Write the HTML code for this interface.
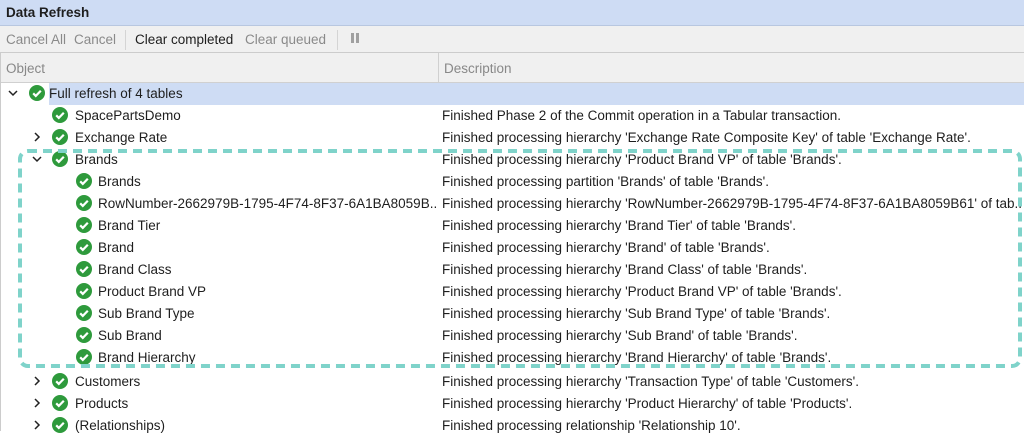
<!DOCTYPE html>
<html><head><style>
*{margin:0;padding:0;box-sizing:border-box}
body{width:1024px;height:431px;overflow:hidden;background:#fff;font-family:"Liberation Sans",sans-serif;font-size:13.5px;color:#1e1e1e;position:relative}
.title{position:absolute;left:0;top:0;width:1024px;height:26px;background:#cedcf4;font-weight:bold;font-size:13.5px;padding:5px 0 0 6px;border-bottom:1px solid #b8c7e0}
.tb{position:absolute;left:0;top:26px;width:1024px;height:27px;background:#f0f0f0;border-bottom:1px solid #ccc}
.tb span{position:absolute;top:6px;color:#8a8a8a}
.sep{position:absolute;top:4px;width:1px;height:20px;background:#d4d4d4}
.hdr{position:absolute;left:0;top:53px;width:1024px;height:30px;background:#f0f0f0;border-bottom:1px solid #d0d0d0;color:#888}
.hdr span{position:absolute;top:8px}
.r{position:absolute;left:0;width:1024px;height:22px}
.r span{position:absolute;top:4px;white-space:nowrap}
.ic{position:absolute;top:3px;width:16px;height:16px}
.ch{position:absolute;top:5px;width:10px;height:12px}
.d{left:442px}
</style></head><body>
<div class="title">Data Refresh</div>
<div class="tb">
<span style="left:6px">Cancel All</span><span style="left:74px">Cancel</span>
<div class="sep" style="left:125px"></div>
<span style="left:135px;color:#1e1e1e">Clear completed</span><span style="left:245px">Clear queued</span>
<div class="sep" style="left:337px"></div>
<div style="position:absolute;left:351px;top:7px;width:3px;height:10px;background:#a0a0a0"></div>
<div style="position:absolute;left:356px;top:7px;width:3px;height:10px;background:#a0a0a0"></div>
</div>
<div class="hdr"><span style="left:6px">Object</span><div style="position:absolute;left:438px;top:0;width:1px;height:30px;background:#d0d0d0"></div><span style="left:444px">Description</span></div>
<div style="position:absolute;left:0;top:53px;width:1px;height:378px;background:#ccc"></div>
<div style="position:absolute;left:49px;top:83px;width:975px;height:22px;background:#cedcf4"></div>
<svg width="0" height="0" style="position:absolute"><defs>
<symbol id="ok" viewBox="0 0 16 16"><circle cx="8" cy="8" r="8" fill="#2e9a3c"/><path d="M4.2 8.3l2.6 2.6 5-5.2" stroke="#fff" stroke-width="2.2" fill="none"/></symbol>
<symbol id="cr" viewBox="0 0 10 12"><path d="M3 2l4 4-4 4" stroke="#222" stroke-width="1.5" fill="none"/></symbol>
<symbol id="cd" viewBox="0 0 10 12"><path d="M1 4l4 4 4-4" stroke="#222" stroke-width="1.5" fill="none"/></symbol>
</defs></svg>
<div class="r" style="top:82px"><svg class="ch" style="left:8px"><use href="#cd"/></svg><svg class="ic" style="left:29px"><use href="#ok"/></svg><span style="left:49px">Full refresh of 4 tables</span></div>
<div class="r" style="top:104px"><svg class="ic" style="left:52px"><use href="#ok"/></svg><span style="left:75px">SpacePartsDemo</span><span class="d">Finished Phase 2 of the Commit operation in a Tabular transaction.</span></div>
<div class="r" style="top:126px"><svg class="ch" style="left:32px"><use href="#cr"/></svg><svg class="ic" style="left:52px"><use href="#ok"/></svg><span style="left:75px">Exchange Rate</span><span class="d">Finished processing hierarchy 'Exchange Rate Composite Key' of table 'Exchange Rate'.</span></div>
<div class="r" style="top:148px"><svg class="ch" style="left:32px"><use href="#cd"/></svg><svg class="ic" style="left:52px"><use href="#ok"/></svg><span style="left:75px">Brands</span><span class="d">Finished processing hierarchy 'Product Brand VP' of table 'Brands'.</span></div>
<div class="r" style="top:170px"><svg class="ic" style="left:76px"><use href="#ok"/></svg><span style="left:98px">Brands</span><span class="d">Finished processing partition 'Brands' of table 'Brands'.</span></div>
<div class="r" style="top:192px"><svg class="ic" style="left:76px"><use href="#ok"/></svg><span style="left:98px;width:340px;overflow:hidden">RowNumber-2662979B-1795-4F74-8F37-6A1BA8059B...</span><span class="d" style="width:580px;overflow:hidden">Finished processing hierarchy 'RowNumber-2662979B-1795-4F74-8F37-6A1BA8059B61' of tab...</span></div>
<div class="r" style="top:214px"><svg class="ic" style="left:76px"><use href="#ok"/></svg><span style="left:98px">Brand Tier</span><span class="d">Finished processing hierarchy 'Brand Tier' of table 'Brands'.</span></div>
<div class="r" style="top:236px"><svg class="ic" style="left:76px"><use href="#ok"/></svg><span style="left:98px">Brand</span><span class="d">Finished processing hierarchy 'Brand' of table 'Brands'.</span></div>
<div class="r" style="top:258px"><svg class="ic" style="left:76px"><use href="#ok"/></svg><span style="left:98px">Brand Class</span><span class="d">Finished processing hierarchy 'Brand Class' of table 'Brands'.</span></div>
<div class="r" style="top:280px"><svg class="ic" style="left:76px"><use href="#ok"/></svg><span style="left:98px">Product Brand VP</span><span class="d">Finished processing hierarchy 'Product Brand VP' of table 'Brands'.</span></div>
<div class="r" style="top:302px"><svg class="ic" style="left:76px"><use href="#ok"/></svg><span style="left:98px">Sub Brand Type</span><span class="d">Finished processing hierarchy 'Sub Brand Type' of table 'Brands'.</span></div>
<div class="r" style="top:324px"><svg class="ic" style="left:76px"><use href="#ok"/></svg><span style="left:98px">Sub Brand</span><span class="d">Finished processing hierarchy 'Sub Brand' of table 'Brands'.</span></div>
<div class="r" style="top:346px"><svg class="ic" style="left:76px"><use href="#ok"/></svg><span style="left:98px">Brand Hierarchy</span><span class="d">Finished processing hierarchy 'Brand Hierarchy' of table 'Brands'.</span></div>
<div class="r" style="top:370px"><svg class="ch" style="left:32px"><use href="#cr"/></svg><svg class="ic" style="left:52px"><use href="#ok"/></svg><span style="left:75px">Customers</span><span class="d">Finished processing hierarchy 'Transaction Type' of table 'Customers'.</span></div>
<div class="r" style="top:392px"><svg class="ch" style="left:32px"><use href="#cr"/></svg><svg class="ic" style="left:52px"><use href="#ok"/></svg><span style="left:75px">Products</span><span class="d">Finished processing hierarchy 'Product Hierarchy' of table 'Products'.</span></div>
<div class="r" style="top:414px"><svg class="ch" style="left:32px"><use href="#cr"/></svg><svg class="ic" style="left:52px"><use href="#ok"/></svg><span style="left:75px">(Relationships)</span><span class="d">Finished processing relationship 'Relationship 10'.</span></div>
<svg style="position:absolute;left:0;top:0" width="1024" height="431"><rect x="20" y="151" width="1000" height="215" rx="8" fill="none" stroke="#7fd3ca" stroke-width="4" stroke-dasharray="9 6"/></svg>
</body></html>
